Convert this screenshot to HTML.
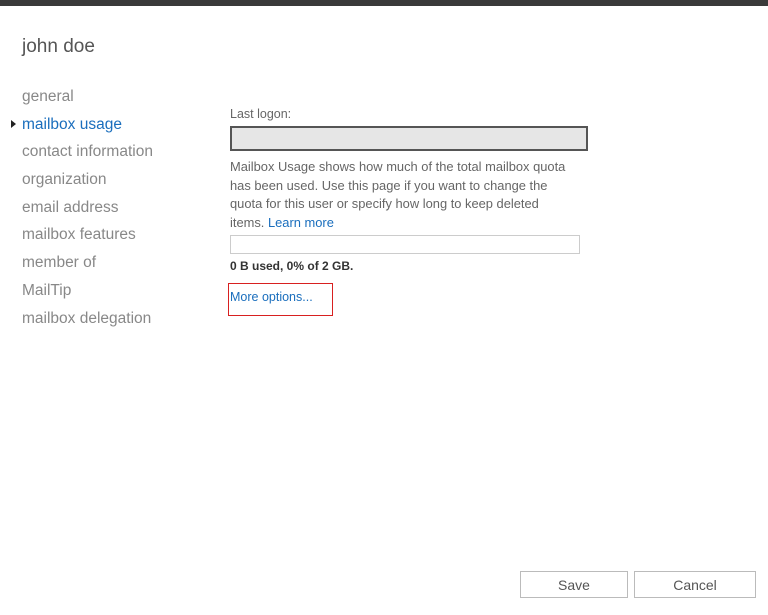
<!DOCTYPE html>
<html><head><style>
body{margin:0;width:768px;height:615px;background:#fff;font-family:"Liberation Sans",sans-serif;position:relative;overflow:hidden}
.a{position:absolute;white-space:nowrap}
.nav{left:22px;font-size:15.5px;color:#888;line-height:20px}
.p{left:230px;font-size:12.5px;color:#666}
.btn{position:absolute;top:571px;height:27px;border:1px solid #bbb;background:#fff;font-size:14px;color:#555;text-align:center;line-height:27px;box-sizing:border-box}
</style></head><body>
<div class="a" style="left:0;top:0;width:768px;height:6px;background:#3a3a3a"></div>
<div class="a" style="left:22px;top:36px;font-size:19px;color:#555">john doe</div>
<div class="a nav" style="top:87px">general</div>
<div class="a" style="left:11px;top:120px;width:0;height:0;border-left:5px solid #222;border-top:4px solid transparent;border-bottom:4px solid transparent"></div>
<div class="a nav" style="top:115px;color:#1a6ebd">mailbox usage</div>
<div class="a nav" style="top:142px">contact information</div>
<div class="a nav" style="top:170px">organization</div>
<div class="a nav" style="top:198px">email address</div>
<div class="a nav" style="top:225px">mailbox features</div>
<div class="a nav" style="top:253px">member of</div>
<div class="a nav" style="top:281px">MailTip</div>
<div class="a nav" style="top:309px">mailbox delegation</div>
<div class="a p" style="top:107px">Last logon:</div>
<div class="a" style="left:230px;top:126px;width:358px;height:25px;box-sizing:border-box;border:2px solid #555;background:#e6e6e6"></div>
<div class="a p" style="top:158px;line-height:18.5px;font-size:12.9px">Mailbox Usage shows how much of the total mailbox quota<br>has been used. Use this page if you want to change the<br>quota for this user or specify how long to keep deleted<br>items. <span style="color:#1a6ebd">Learn more</span></div>
<div class="a" style="left:230px;top:235px;width:350px;height:19px;box-sizing:border-box;border:1px solid #ccc"></div>
<div class="a p" style="top:259px;color:#333;font-weight:bold;font-size:12px">0 B used, 0% of 2 GB.</div>
<div class="a" style="left:228px;top:283px;width:105px;height:33px;box-sizing:border-box;border:1.5px solid #d82020"></div>
<div class="a p" style="top:290px;color:#1a6ebd">More options...</div>
<div class="btn" style="left:520px;width:108px">Save</div>
<div class="btn" style="left:634px;width:122px">Cancel</div>
</body></html>
